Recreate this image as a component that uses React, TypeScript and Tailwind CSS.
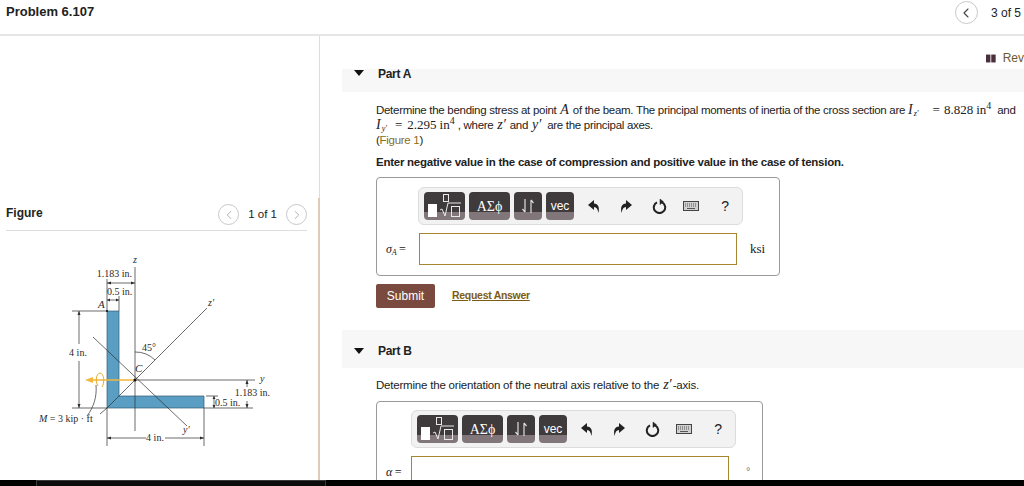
import { ChevronLeft, ChevronRight } from "lucide-react";

const serif = "font-['Liberation_Serif',serif]";

function RoundBtn({ size, faded, right }: { size: string; faded?: boolean; right?: boolean }) {
  const Icon = right ? ChevronRight : ChevronLeft;
  return (
    <div className={`${size} flex items-center justify-center rounded-full border border-[#c8c8c8] bg-white`}>
      <Icon className={faded ? "w-3.5 h-3.5 text-[#aaaaaa]" : "w-4 h-4 text-[#444444]"} strokeWidth={1.6} />
    </div>
  );
}

function ToolBtn({ w, children }: { w: string; children: React.ReactNode }) {
  return (
    <div className={`${w} h-[28px] rounded-[4px] flex items-center justify-center text-white bg-linear-to-b from-[#3f3a3c] from-[72%] to-[#81767a] to-[72%]`}>
      {children}
    </div>
  );
}

function Toolbar({ className }: { className: string }) {
  return (
    <div className={`${className} h-[38px] rounded-[6px] border border-[#dcdcdc] bg-[#f2f2f2] flex items-center pl-[5px]`}>
      <div className="flex gap-[4px]">
        <ToolBtn w="w-[41px]">
          <svg width="36" height="24" viewBox="0 0 36 24" fill="none">
            <rect x="1" y="10" width="9" height="13" fill="#ffffff" />
            <rect x="16.500" y="0.500" width="5" height="7" stroke="#e8e8e8" />
            <path d="M13 16l2-1 3 7 3-13h13" stroke="#e8e8e8" strokeWidth="1" />
            <rect x="24.500" y="12.500" width="8" height="10" stroke="#e8e8e8" />
          </svg>
        </ToolBtn>
        <ToolBtn w="w-[41px]">
          <span className={`${serif} text-[14px] tracking-normal`}>ΑΣϕ</span>
        </ToolBtn>
        <ToolBtn w="w-[28px]">
          <svg width="14" height="16" viewBox="0 0 14 16" fill="none" stroke="#dddddd" strokeWidth="1.2">
            <path d="M4 1v13M4 14l-2.500-3" />
            <path d="M10 15V2M10 2l2.500 3" />
          </svg>
        </ToolBtn>
        <ToolBtn w="w-[28px]">
          <span className="text-[12px] tracking-normal">vec</span>
        </ToolBtn>
      </div>
      <div className="flex items-center ml-[11px]">
        <div className="w-[18px] flex justify-center">
          <svg width="12" height="13" viewBox="0 0 12 13" fill="#222222">
            <path d="M6 0L0 5l6 5V7c2.600 0 3.800 2 4.400 6 1.400-5.500 0-9.200-4.400-9.500z" />
          </svg>
        </div>
        <div className="w-[18px] flex justify-center ml-[14px]">
          <svg width="12" height="13" viewBox="0 0 12 13" fill="#222222">
            <path d="M6 0l6 5-6 5V7C3.400 7 2.200 9 1.600 13 .2 7.500 1.600 3.800 6 3.500z" />
          </svg>
        </div>
        <div className="w-[18px] flex justify-center ml-[15px]">
          <svg width="15" height="16" viewBox="0 0 15 16" fill="none" stroke="#222222" strokeWidth="2">
            <path d="M5 4.300a5.700 5.700 0 1 0 5 0" />
            <path d="M8 1v5.500l3.500-2.700z" fill="#222222" strokeWidth="0.5" />
          </svg>
        </div>
        <div className="w-[18px] flex justify-center ml-[14px]">
          <svg width="16" height="10" viewBox="0 0 16 10">
            <rect x="0.500" y="0.500" width="15" height="9" fill="#d0d0d0" stroke="#444444" />
            <path d="M2 3h12M2 5h12" stroke="#555555" strokeDasharray="1 1" />
            <path d="M4 7.500h8" stroke="#555555" />
          </svg>
        </div>
        <div className="w-[18px] flex justify-center ml-[16px] text-[14px] text-[#222222]">?</div>
      </div>
    </div>
  );
}

function Triangle() {
  return <div className="w-0 h-0 border-l-[5px] border-r-[5px] border-t-[6px] border-l-transparent border-r-transparent border-t-[#111111]" />;
}

function MathI({ sub, value, eq }: { sub: string; value: string; eq: string }) {
  return (
    <span className={`${serif} text-[13px] leading-[0] tracking-normal`}>
      <i className="text-[14px]">I</i>
      <sub className="text-[8px] leading-[0] italic ml-[1px]">{sub}</sub>
      <span className={eq}>=</span>
      {value}
      <span className="ml-[3px]">in</span>
      <sup className="text-[10px] leading-[0] mr-[3px]">4</sup>
    </span>
  );
}

function MathVar({ children }: { children: React.ReactNode }) {
  return <i className={`${serif} mx-[1px] text-[14px] leading-[0] tracking-normal`}>{children}</i>;
}

function Figure() {
  const line = "#2c2c2c";
  return (
    <svg width="318" height="248" viewBox="0 232 318 248" fill="none" className="block">
      <path d="M107 312h12v85h85v12H107z" fill="#5b9ec3" stroke="#2f5a72" strokeWidth="0.7" />
      <g stroke={line} strokeWidth="0.7">
        <path d="M135 268v164M135 381h120M107 409L207 309M93 338L187 427" />
        <path d="M107 280v32M107 409v38M119 297v15M204 409v38" />
        <path d="M72 312h35M72 409h35M79 312v33M79 362v47" />
        <path d="M107 284h28M107 301h12" />
        <path d="M107 439h39M165 439h39" />
        <path d="M204 409h49M206 397h12M214 397v12M247 381v7M247 402v7" />
        <path d="M135 353a28 28 0 0 1 20 8" />
        <path d="M96 386c1 11-2 22-9 31" />
        <path d="M100 415l7-6" />
      </g>
      <g fill={line}>
        <path d="M107 284l4-1.500v3zM135 284l-4-1.500v3zM107 301l3-1.500v3zM119 301l-3-1.500v3z" />
        <path d="M79 312l-1.500 4h3zM79 409l-1.500-4h3z" />
        <path d="M107 439l4-1.500v3zM204 439l-4-1.500v3z" />
        <path d="M247 381l-1.500 4h3zM247 409l-1.500-4h3zM214 397l-1.500 3h3zM214 409l-1.500-3h3z" />
      </g>
      <path d="M92 381h43" stroke="#f2b73a" strokeWidth="1.500" />
      <path d="M85 381l8-3v6z" fill="#f2b73a" />
      <path d="M98 387c-3-5-2-12 2-13 4 0 5 10 2 14" stroke="#e9a92e" strokeWidth="1" />
      <circle cx="135" cy="381" r="1.500" fill="#111111" />
      <circle cx="107" cy="312" r="1" fill="#111111" />
      <g className={serif} fontSize="10" fill="#2a2a2a">
        <text x="132" y="278" textAnchor="end">1.183 in.</text>
        <text x="107" y="296">0.5 in.</text>
        <text x="78" y="357" textAnchor="middle">4 in.</text>
        <text x="142" y="352">45°</text>
        <text x="155" y="442" textAnchor="middle">4 in.</text>
        <text x="270" y="397" textAnchor="end">1.183 in.</text>
        <text x="215" y="407">0.5 in.</text>
        <text x="39" y="423"><tspan fontStyle="italic">M</tspan> = 3 kip · ft</text>
        <g fontStyle="italic">
          <text x="133" y="264">z</text>
          <text x="98" y="309" fontSize="11">A</text>
          <text x="135" y="373" fontSize="11">C</text>
          <text x="260" y="383">y</text>
          <text x="183" y="434">y′</text>
          <text x="208" y="307">z′</text>
        </g>
      </g>
    </svg>
  );
}

export default function App() {
  return (
    <div className="w-[1024px] h-[486px] flex flex-col overflow-hidden bg-white text-[#222222] font-['Liberation_Sans',sans-serif]">
      <header className="h-[36px] shrink-0 flex items-start border-b-2 border-[#e6e6e6] pl-[6px] pr-[3px]">
        <h1 className="text-[13px] font-bold leading-[23px]">Problem 6.107</h1>
        <div className="ml-auto flex items-center mt-[1px]">
          <RoundBtn size="w-[23px] h-[23px]" />
          <span className="ml-[13px] text-[12px]">3 of 5</span>
        </div>
      </header>

      <main className="flex-1 min-h-0 flex">
        <aside className="w-[318px] shrink-0 pt-[165px] overflow-hidden">
          <div className="ml-[6px] w-[301px] h-[30px] flex items-start border-b border-[#dddddd]">
            <h2 className="text-[12px] font-bold leading-[24px]">Figure</h2>
            <div className="ml-auto flex items-center mt-[3px]">
              <RoundBtn size="w-[21px] h-[21px]" faded />
              <span className="mx-[9px] text-[11.5px]">1 of 1</span>
              <RoundBtn size="w-[21px] h-[21px]" faded right />
            </div>
          </div>
          <Figure />
        </aside>

        <div className="w-[2px] shrink-0 flex flex-col">
          <div className="h-[162px] w-px ml-px bg-[#e2dcd6]" />
          <div className="flex-1 bg-[#dfcbb8]" />
        </div>

        <section className="flex-1 min-w-0 overflow-hidden text-[11.5px] tracking-[-0.29px]">
          <div className="h-[33px] pl-[666px] flex items-start pt-[17px] whitespace-nowrap text-[#6d5a2e]">
            <svg width="11" height="9" viewBox="0 0 11 9" className="mt-[1px]" fill="#4a2f3d">
              <rect x="0" y="0" width="5" height="9" />
              <rect x="6" y="0" width="5" height="9" />
            </svg>
            <span className="ml-[7px] text-[12px] tracking-normal leading-[11px]">Rev</span>
          </div>

          <div className="ml-[22px] h-[23px] bg-[#f7f7f7] flex items-start">
            <div className="ml-[12px] mt-[1px]"><Triangle /></div>
            <span className="ml-[14px] text-[12px] font-bold leading-[11px]">Part A</span>
          </div>

          <div className="ml-[56px] mt-[11px] leading-[15px] whitespace-nowrap">
            <p>
              Determine the bending stress at point <MathVar>A</MathVar> of the beam. The principal moments of inertia of the cross section are{" "}
              <MathI sub="z′" value="8.828" eq="ml-[14px] mr-[4px]" /> and
            </p>
            <p>
              <MathI sub="y′" value="2.295" eq="ml-[8px] mr-[5px]" />, where <MathVar>z′</MathVar> and <span className="mr-[2px]"><MathVar>y′</MathVar></span> are the principal axes.
            </p>
            <p>
              (<span className="text-[#8a6d1c]">Figure 1</span>)
            </p>
            <p className="mt-[7px] font-bold tracking-[-0.25px]">Enter negative value in the case of compression and positive value in the case of tension.</p>
          </div>

          <div className="ml-[56px] mt-[7px] w-[404px] h-[99px] rounded-[4px] border border-[#999999] pt-[9px]">
            <Toolbar className="ml-[41px] w-[325px]" />
            <div className="mt-[8px] flex items-center">
              <span className={`${serif} w-[41px] pl-[9px] text-[12px] italic whitespace-nowrap`}>σ<sub className="text-[8px]">A</sub> <span className="not-italic">=</span></span>
              <div className="ml-px w-[318px] h-[32px] border border-[#a5852f] bg-white" />
              <span className={`${serif} ml-[13px] text-[13px] tracking-normal`}>ksi</span>
            </div>
          </div>

          <div className="ml-[56px] mt-[8px] flex items-center">
            <button className="w-[59px] h-[24px] rounded-[2px] bg-[#7a4a3e] text-white text-[12px] tracking-normal">Submit</button>
            <a className="ml-[17px] text-[10.5px] font-bold text-[#7c5c14] underline">Request Answer</a>
          </div>

          <div className="ml-[22px] mt-[22px] h-[38px] pt-[3px] bg-[#f7f7f7] flex items-center">
            <div className="ml-[12px]"><Triangle /></div>
            <span className="ml-[14px] text-[12px] font-bold">Part B</span>
          </div>

          <p className="ml-[56px] mt-[10px] leading-[15px] whitespace-nowrap tracking-[-0.2px]">
            Determine the orientation of the neutral axis relative to the <MathVar>z′</MathVar>-axis.
          </p>

          <div className="ml-[56px] mt-[8px] w-[387px] h-[120px] rounded-[4px] border border-[#999999] pt-[8px]">
            <Toolbar className="ml-[34px] w-[325px]" />
            <div className="mt-[8px] flex items-start">
              <span className={`${serif} w-[34px] pl-[9px] pt-[7px] text-[12px] italic whitespace-nowrap`}>α <span className="not-italic">=</span></span>
              <div className="w-[318px] h-[32px] border border-[#a5852f] bg-white" />
              <span className="ml-[17px] pt-[7px] text-[11px] text-[#777777]">°</span>
            </div>
          </div>
        </section>
      </main>

      <footer className="h-[6px] shrink-0 bg-black">
        <div className="ml-[36px] w-[290px] h-[6px] border-t border-l border-r border-[#3a3a3a] bg-[#0c0c0c]" />
      </footer>
    </div>
  );
}
